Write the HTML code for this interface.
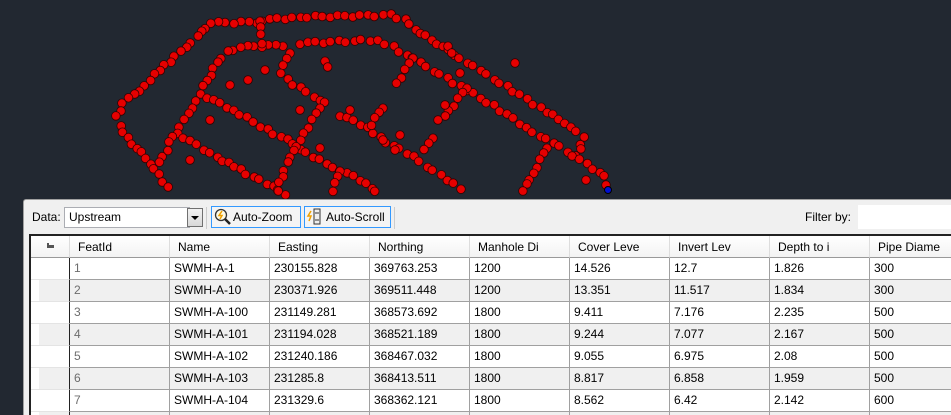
<!DOCTYPE html>
<html><head><meta charset="utf-8"><style>
html,body{margin:0;width:951px;height:415px;overflow:hidden}
body{background:#222831;position:relative;font-family:"Liberation Sans",sans-serif;font-size:12px}
#map{position:absolute;left:0;top:0}
#panel{position:absolute;left:23px;top:199px;width:928px;height:216px;background:#f0f0f0;border:1px solid #a0a0a0;border-right:none;border-bottom:none;border-radius:3px 0 0 0;overflow:hidden;box-sizing:border-box}
.tb{position:absolute;top:0;height:33px;font-size:12px;color:#000}
#tbl{position:absolute;left:5px;top:34px;width:921px;height:180px;background:#fff;border-top:2px solid #222;border-left:2px solid #222;overflow:hidden}
.cell{position:absolute;height:21px;line-height:21px;padding-left:4px;box-sizing:border-box;border-right:1px solid #a0a0a0;border-bottom:1px solid #a0a0a0;white-space:nowrap;overflow:hidden;color:#000}
.hdr{background:linear-gradient(#fff,#f3f3f3);padding-left:8px;height:22px;line-height:22px;border-bottom:1px solid #999;border-right:1px solid #ddd}
.btn{position:absolute;top:6px;height:22px;border:1px solid #3399ff;background:#f4f4f4;box-sizing:border-box;line-height:20px;font-size:12px}
</style></head><body>
<svg id="map" width="951" height="200"></svg>
<div id="panel">
 <div class="tb" style="left:8px;top:10px">Data:</div>
 <div style="position:absolute;left:40px;top:7px;width:126px;height:21px;background:#fff;border:1px solid #abadb3;box-sizing:border-box;line-height:19px;padding-left:4px">Upstream</div>
 <div style="position:absolute;left:163px;top:8px;width:16px;height:19px;background:linear-gradient(#f2f2f2,#d8d8d8);border:1px solid #707070;box-sizing:border-box"><div style="margin:7px auto 0;width:0;height:0;border-left:4px solid transparent;border-right:4px solid transparent;border-top:4px solid #000"></div></div>
 <div style="position:absolute;left:182px;top:7px;width:1px;height:22px;background:#ccc"></div>
 <div class="btn" style="left:187px;width:90px"><svg width="18" height="18" style="position:absolute;left:2px;top:1px"><circle cx="7" cy="7" r="5.5" fill="#fffbe6" stroke="#333" stroke-width="1.3"/><path d="M8 3 L5 7.5 L8 7.5 L6 11" stroke="#f0a000" stroke-width="1.5" fill="none"/><path d="M11 11 L16 16" stroke="#222" stroke-width="2.5"/></svg><span style="position:absolute;left:21px">Auto-Zoom</span></div>
 <div class="btn" style="left:280px;width:87px"><svg width="20" height="18" style="position:absolute;left:1px;top:1px"><path d="M5 3 L2 8 L5 8 L3 13" stroke="#f0a000" stroke-width="1.5" fill="none"/><rect x="8" y="1" width="6" height="15" fill="#eee" stroke="#333"/><path d="M9 5 h4 M9 12 h4" stroke="#333"/></svg><span style="position:absolute;left:21px">Auto-Scroll</span></div>
 <div style="position:absolute;left:370px;top:7px;width:1px;height:22px;background:#ccc"></div>
 <div class="tb" style="left:781px;top:10px">Filter by:</div>
 <div style="position:absolute;left:834px;top:5px;width:94px;height:24px;background:#fff"></div>
 <div id="tbl"></div>
</div>
<script>
var T=document.getElementById('tbl');
var heads=['FeatId','Name','Easting','Northing','Manhole Di','Cover Leve','Invert Lev','Depth to i','Pipe Diame'];
var rows=[['1','SWMH-A-1','230155.828','369763.253','1200','14.526','12.7','1.826','300'],
['2','SWMH-A-10','230371.926','369511.448','1200','13.351','11.517','1.834','300'],
['3','SWMH-A-100','231149.281','368573.692','1800','9.411','7.176','2.235','500'],
['4','SWMH-A-101','231194.028','368521.189','1800','9.244','7.077','2.167','500'],
['5','SWMH-A-102','231240.186','368467.032','1800','9.055','6.975','2.08','500'],
['6','SWMH-A-103','231285.8','368413.511','1800','8.817','6.858','1.959','500'],
['7','SWMH-A-104','231329.6','368362.121','1800','8.562','6.42','2.142','600'],['','','','','','','','','']];
var RH=39,h='';
h+='<div class="cell hdr" style="left:0;top:0;width:'+RH+'px;padding:0"><div style="position:absolute;left:16px;top:9px;width:7px;height:3px;background:#555"></div><div style="position:absolute;left:16px;top:7px;width:2px;height:2px;background:#555"></div></div>';
for(var c=0;c<9;c++)h+='<div class="cell hdr" style="left:'+(RH+c*100)+'px;top:0;width:100px">'+heads[c]+'</div>';
for(var r=0;r<rows.length;r++){var y=22+r*22,bg=r%2?'#f0f0f0':'#fff';
h+='<div class="cell" style="left:0;top:'+y+'px;width:'+RH+'px;height:22px;background:'+bg+';border-right:1px solid #222;border-bottom:1px solid #e4e4e4"><div style="position:absolute;left:0;top:0;width:8px;height:22px;background:#fff"></div></div>';
for(c=0;c<9;c++)h+='<div class="cell" style="left:'+(RH+c*100)+'px;top:'+y+'px;width:100px;height:22px;background:'+bg+(c==0?';color:#6d6d6d':'')+'">'+rows[r][c]+'</div>';}
T.innerHTML=h;
var S=document.getElementById('map');
var lines=[
[[257,22],[210,23],[197,37],[180,52],[160,70],[140,90],[123,103],[117,117],[123,133],[137,148],[150,163],[167,187],[170,197]],
[[262,20],[300,17],[390,15],[405,20],[420,33],[437,43],[460,58],[487,75],[520,95],[547,112],[570,126],[583,137],[580,150],[573,160]],
[[283,45],[240,47],[227,52],[217,63],[207,80],[193,107],[180,127],[170,143],[160,163],[157,173]],
[[300,43],[377,40],[393,47],[420,63],[467,90],[500,110],[533,132],[560,147],[580,160],[600,172],[608,182]],
[[260,20],[262,50]],[[290,52],[280,73],[287,80],[300,88],[320,100],[330,107]],
[[207,97],[233,110],[267,130],[287,140],[313,157],[340,170],[367,183],[380,197]],
[[183,137],[217,157],[240,170],[273,187],[290,197]],
[[320,107],[300,140],[287,163],[275,197]],
[[340,115],[367,127],[380,138],[413,157],[447,180],[467,193]],
[[413,57],[393,90]],[[383,107],[367,130]],[[433,137],[420,157]],[[467,87],[440,123]],
[[547,147],[533,173],[520,197]],[[340,170],[330,197]],[[448,45],[455,62]],[[325,60],[330,75]]];
var out='';
lines.forEach(function(L){for(var i=0;i<L.length-1;i++){var a=L[i],b=L[i+1],d=Math.hypot(b[0]-a[0],b[1]-a[1]),n=Math.max(1,Math.round(d/7.5));for(var k=0;k<n;k++){var t=k/n;out+='<circle cx="'+(a[0]+(b[0]-a[0])*t+Math.sin(i*7+k*3)*1.2).toFixed(1)+'" cy="'+(a[1]+(b[1]-a[1])*t+Math.cos(i*5+k*2)*1.2).toFixed(1)+'" r="4.3"/>';}}});
[[190,160],[210,120],[230,85],[248,80],[265,70],[300,110],[320,148],[350,110],[383,140],[400,135],[395,150],[445,105],[460,73],[438,120],[515,63],[586,180],[606,185]].forEach(function(p){out+='<circle cx="'+p[0]+'" cy="'+p[1]+'" r="4.3"/>';});
S.innerHTML='<g fill="#e60000" stroke="#300" stroke-width="0.8">'+out+'</g><circle cx="608" cy="190" r="3.5" fill="#0010d0" stroke="#000"/>';
</script>
</body></html>
